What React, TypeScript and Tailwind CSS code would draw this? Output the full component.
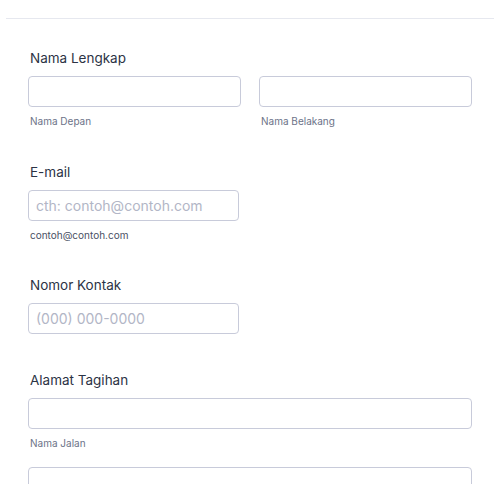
const font = { fontFamily: 'Inter, "Noto Sans", sans-serif' };

function Field({ placeholder, className = '' }: { placeholder?: string; className?: string }) {
  return (
    <input
      placeholder={placeholder}
      className={`h-[31px] rounded-[4px] border border-[#c8cbda] bg-white px-[7px] text-[14px] text-[#2c3345] placeholder:text-[#b2b6c6] outline-none ${className}`}
    />
  );
}

function Label({ children }: { children: string }) {
  return <div className="pl-[2px] text-[13.5px] leading-[18px] text-[#2c3345] mb-[9px]">{children}</div>;
}

function Sub({ children, dark }: { children: string; dark?: boolean }) {
  return (
    <div className={`mt-[7px] pl-[2px] text-[10px] leading-[14px] ${dark ? 'text-[#4a5064]' : 'text-[#6c7388]'}`}>
      {children}
    </div>
  );
}

export default function App() {
  return (
    <div className="h-[484px] w-[500px] overflow-hidden bg-white" style={font}>
      <div className="mx-[6px] mt-[18px] border-t border-[#e6e8ef]" />
      <div className="px-[28px] pt-[30px]">
        <section>
          <Label>Nama Lengkap</Label>
          <div className="flex gap-[18px]">
            <div className="w-[213px]">
              <Field className="w-full" />
              <Sub>Nama Depan</Sub>
            </div>
            <div className="w-[213px]">
              <Field className="w-full" />
              <Sub>Nama Belakang</Sub>
            </div>
          </div>
        </section>

        <section className="mt-[35px]">
          <Label>E-mail</Label>
          <Field placeholder="cth: contoh@contoh.com" className="w-[211px]" />
          <Sub dark>contoh@contoh.com</Sub>
        </section>

        <section className="mt-[34px]">
          <Label>Nomor Kontak</Label>
          <Field placeholder="(000) 000-0000" className="w-[211px]" />
        </section>

        <section className="mt-[37px]">
          <Label>Alamat Tagihan</Label>
          <Field className="w-[444px]" />
          <Sub>Nama Jalan</Sub>
          <Field className="mt-[17px] w-[444px]" />
        </section>
      </div>
    </div>
  );
}
